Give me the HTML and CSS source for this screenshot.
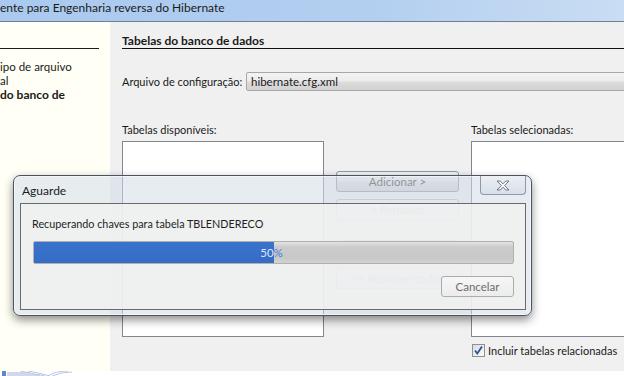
FILE: index.html
```html
<!DOCTYPE html>
<html lang="pt">
<head>
<meta charset="utf-8">
<title>Engenharia reversa do Hibernate</title>
<link rel="stylesheet" href="styles.css">
</head>
<body>
<div class="window">
  <div class="titlebar"><span class="title-text">ente para Engenharia reversa do Hibernate</span></div>
  <div class="main">
    <aside class="sidebar">
      <div class="side-rule"></div>
      <ul class="steps">
        <li>ipo de arquivo</li>
        <li>al</li>
        <li class="current">do banco de</li>
      </ul>
    </aside>
    <section class="content">
      <h1 class="page-title">Tabelas do banco de dados</h1>
      <div class="config-row">
        <span class="config-label">Arquivo de configuração:</span>
        <div class="combo">hibernate.cfg.xml</div>
      </div>
      <div class="tables">
        <div class="col">
          <div class="col-label">Tabelas disponíveis:</div>
          <div class="listbox"></div>
        </div>
        <div class="col col-buttons">
          <button class="btn">Adicionar &gt;</button>
          <button class="btn disabled">&lt; Remover</button>
          <button class="btn disabled gap">Adicionar todos &gt;&gt;</button>
          <button class="btn disabled">&lt;&lt; Remover todos</button>
        </div>
        <div class="col col-right">
          <div class="col-label">Tabelas selecionadas:</div>
          <div class="listbox"></div>
          <div class="check-row">
            <span class="checkbox"><svg width="11" height="11" viewBox="0 0 11 11"><path d="M2 5.5 L4.3 8.5 L9 1.5" fill="none" stroke="#2d4f9e" stroke-width="1.8"/></svg></span>
            <span>Incluir tabelas relacionadas</span>
          </div>
        </div>
      </div>
    </section>
  </div>
  <div class="footer">
    <svg width="80" height="5" viewBox="0 0 80 5">
      <rect x="2" y="0" width="4" height="5" fill="#5f86c8"/>
      <path d="M7 2 H30 M7 4 H40" stroke="#9fb3d6" stroke-width="1"/>
      <path d="M20 0 Q35 3 45 5 M28 0 Q40 2 50 5 M48 5 Q55 0 68 0 M52 5 Q60 1 72 1" stroke="#b9c8e2" stroke-width="1" fill="none"/>
    </svg>
  </div>

  <div class="dialog">
    <div class="dlg-head">
      <span class="dlg-title">Aguarde</span>
      <span class="dlg-close">
        <svg width="14" height="11" viewBox="0 0 14 11"><polygon points="1,1 4.2,1 7,3.8 9.8,1 13,1 8.6,5.5 13,10 9.8,10 7,7.2 4.2,10 1,10 5.4,5.5" fill="#f6f7f9" stroke="#6f7884" stroke-width="1" stroke-linejoin="round"/></svg>
      </span>
    </div>
    <div class="dlg-body">
      <div class="dlg-msg">Recuperando chaves para tabela TBLENDERECO</div>
      <div class="progress">
        <span class="progress-label">50%</span>
        <div class="progress-fill" style="width: 50%"><span class="progress-label light">50%</span></div>
      </div>
      <div class="dlg-actions"><button class="btn cancel">Cancelar</button></div>
    </div>
  </div>
</div>
</body>
</html>
```

FILE: styles.css
```css
* { box-sizing: border-box; }
html, body { margin: 0; padding: 0; }
body {
  width: 624px;
  height: 376px;
  overflow: hidden;
  font-family: Lato, "Noto Sans", sans-serif;
  font-size: 12px;
  color: #1a1a1a;
  background: #fff;
}
.window { position: relative; width: 624px; height: 376px; overflow: hidden; }

.titlebar {
  height: 22px;
  border-bottom: 1px solid #6f7f93;
  background: linear-gradient(90deg, #a9c9ee 0%, #b3cff0 60%, #c9ddf3 100%);
  line-height: 16px;
}
.title-text { color: #1b1b1b; font-size: 12px; }

.main { display: flex; height: 349px; }
.sidebar { width: 110px; background: #fffff5; font-size: 11.5px; }
.side-rule { width: 99px; height: 1px; background: #1e1e1e; margin-top: 26px; }
.steps { list-style: none; margin: 11px 0 0; padding: 0; line-height: 14px; }
.steps .current { font-weight: bold; font-size: 12px; }

.content { flex: 1; background: #f0f0f0; padding-left: 12px; overflow: hidden; }
.page-title {
  margin: 0;
  padding-top: 11px;
  font-size: 12px;
  line-height: 15px;
  font-weight: bold;
  border-bottom: 1px solid #111;
  white-space: nowrap;
}
.config-row { display: flex; align-items: center; margin-top: 23px; height: 19px; }
.config-label { width: 124px; white-space: nowrap; font-size: 11px; }
.combo {
  flex: 1;
  height: 19px;
  margin-right: -20px;
  border: 1px solid #a7a7a7;
  border-radius: 2px;
  background: linear-gradient(#f3f3f3 0%, #ececec 48%, #dcdcdc 52%, #d2d2d2 100%);
  padding-left: 4px;
  line-height: 17px;
  font-size: 11.5px;
}

.tables {
  display: grid;
  grid-template-columns: 202px 123px 170px;
  column-gap: 12px;
  margin-top: 31px;
  width: 530px;
}
.col-label { line-height: 15px; height: 15px; margin-bottom: 4px; white-space: nowrap; font-size: 11px; }
.listbox { height: 196px; border: 1px solid #82878f; background: #fff; }

.col-buttons { display: flex; flex-direction: column; gap: 7px; padding-top: 49px; }
.btn {
  font: inherit;
  font-size: 11.5px;
  height: 21px;
  border: 1px solid #8e9aa6;
  border-radius: 3px;
  background: linear-gradient(#f3f3f3 0%, #ebebeb 48%, #dddddd 52%, #d1d1d1 100%);
  color: #3a3a3a;
  padding: 0;
}
.btn.disabled { border-color: #bdbdbd; background: #f4f4f4; color: #a3a3a3; }
.btn.gap { margin-top: 13px; }

.check-row { display: flex; align-items: center; gap: 3px; margin-top: 7px; margin-left: 1px; white-space: nowrap; font-size: 11px; }
.checkbox {
  width: 13px; height: 13px;
  border: 1px solid #8e8f8f;
  background: linear-gradient(135deg, #dcdcdc, #fbfbfb);
  display: flex; align-items: center; justify-content: center;
}

.footer { height: 5px; background: #fff; line-height: 0; }

/* Modal progress dialog */
.dialog {
  position: absolute;
  left: 13px;
  top: 175px;
  width: 519px;
  height: 141px;
  border: 1px solid #4b5562;
  border-radius: 7px;
  background: rgba(212, 221, 232, 0.55);
  box-shadow: 0 4px 10px rgba(0, 0, 0, 0.45), inset 0 0 0 1px rgba(255, 255, 255, 0.55);
  padding: 0 5px 5px 6px;
  display: flex;
  flex-direction: column;
}
.dlg-head { height: 27px; display: flex; justify-content: space-between; align-items: flex-start; }
.dlg-title { margin: 7px 0 0 2px; line-height: 15px; font-size: 12px; color: #1c1c1c; }
.dlg-close {
  width: 46px; height: 19px;
  border: 1px solid #8b99a9;
  border-top: none;
  border-radius: 0 0 4px 4px;
  background: linear-gradient(rgba(236,240,245,0.85), rgba(214,221,230,0.85));
  display: flex; align-items: center; justify-content: center;
}
.dlg-body {
  flex: 1;
  border: 1px solid #6a6a6a;
  background: rgba(240, 240, 240, 0.86);
  padding: 12px 11px 0;
}
.dlg-msg { line-height: 15px; font-size: 10.8px; color: #1e1e1e; }
.progress {
  position: relative;
  margin: 10px 0 0 1px;
  height: 23px;
  border: 1px solid #b0b0b0;
  border-radius: 2px;
  background: linear-gradient(#e3e3e3 0%, #cbcbcb 25%, #c8c8c8 75%, #d2d2d2 100%);
  overflow: hidden;
}
.progress-label {
  position: absolute;
  left: -2px; top: 0;
  width: 479px;
  text-align: center;
  line-height: 21px;
  font-size: 11.5px;
  color: #3d7fdc;
}
.progress-fill {
  position: absolute;
  left: 0; top: 0; bottom: 0;
  overflow: hidden;
  background: linear-gradient(#3a73cc, #356cc6);
}
.progress-label.light { color: #dfe8f7; }
.dlg-actions { display: flex; justify-content: flex-end; margin-top: 12px; }
.btn.cancel { width: 73px; height: 21px; border-color: #acacac; color: #6c6c6c; background: linear-gradient(#f6f6f6, #ececec); }
```
